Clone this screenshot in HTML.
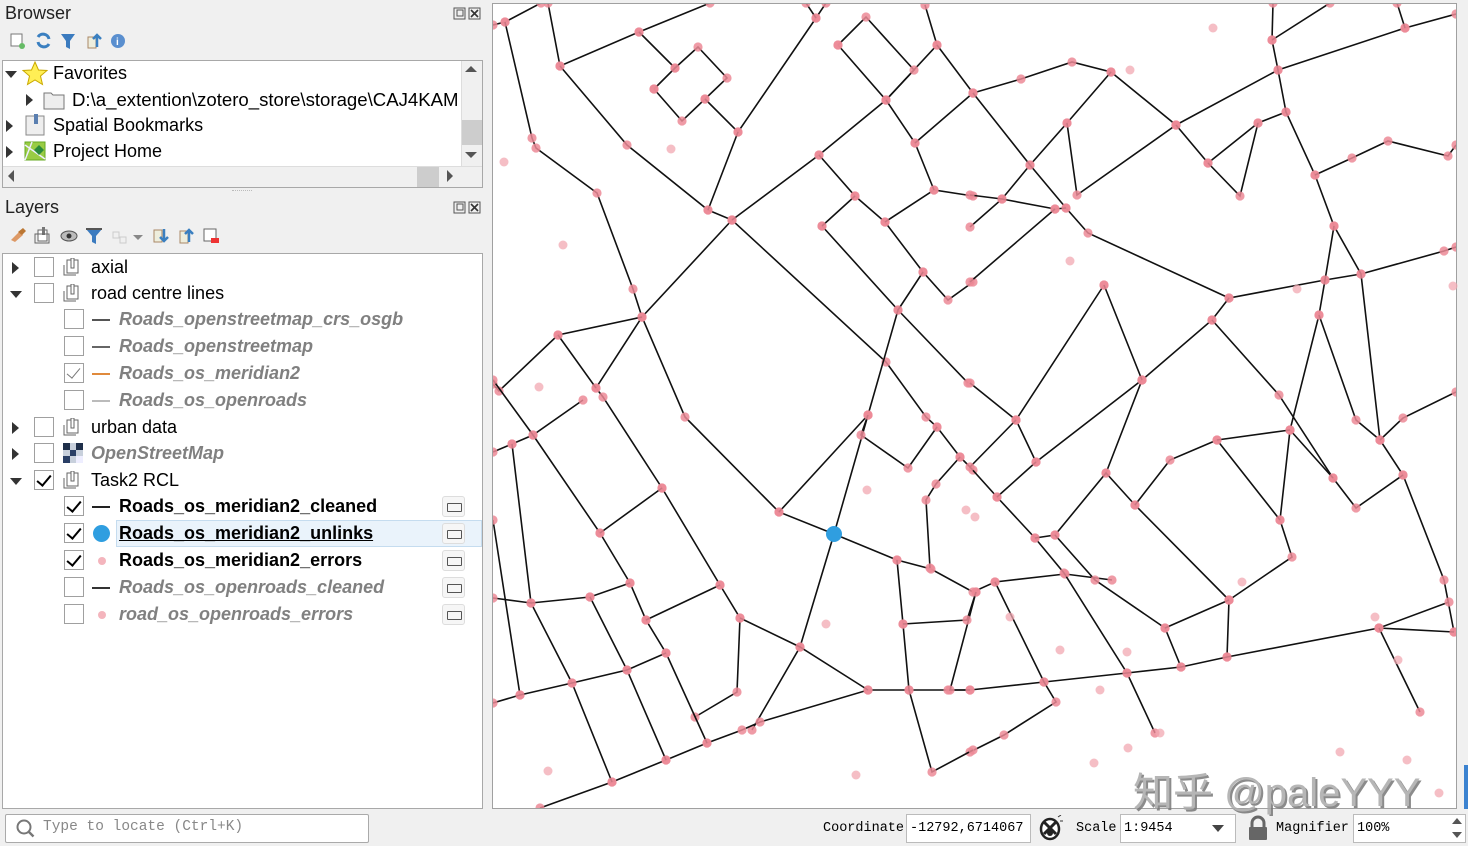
<!DOCTYPE html>
<html><head><meta charset="utf-8">
<style>
*{box-sizing:border-box;margin:0;padding:0}
body{width:1468px;height:846px;background:#f0f0f0;font-family:"Liberation Sans","Noto Sans CJK SC",sans-serif;position:relative;overflow:hidden;color:#000}
.abs{position:absolute}
.title{font-size:18px;color:#222}
.tree{background:#fff;border:1px solid #a8a8a8}
.row{position:absolute;height:27px;font-size:18px;line-height:27px;white-space:nowrap}
.cb{position:absolute;width:20px;height:20px;border:1px solid #a0a0a0;background:#fff;top:3px}
.cb.on::after{content:"";position:absolute;left:5px;top:1px;width:6px;height:12px;border:solid #000;border-width:0 2.5px 2.5px 0;transform:rotate(40deg)}
.cb.g::after{border-color:#777;border-width:0 1.5px 1.5px 0}
.arr{position:absolute;width:0;height:0}
.ar{border-left:7px solid #333;border-top:6px solid transparent;border-bottom:6px solid transparent;top:8px}
.ad{border-top:7px solid #333;border-left:6px solid transparent;border-right:6px solid transparent;top:11px}
.it{font-style:italic;color:#808080;font-weight:bold}
.bd{font-weight:bold}
.grp{position:absolute;width:18px;height:18px;top:4px}
.sym{position:absolute;width:18px;height:2px;top:13px}
.mem{position:absolute;left:442px;width:23px;height:21px;border:1px solid #ddd;border-radius:3px;background:#f6f6f6;top:3px}
.mem::after{content:"";position:absolute;left:4px;top:6px;width:13px;height:7px;border:1.5px solid #555;border-radius:1px}
.mono{font-family:"Liberation Mono","Noto Sans CJK SC",monospace;font-size:13.5px}
</style></head><body>

<div class="abs title" style="left:5px;top:3px">Browser</div>
<svg class="abs" style="left:453px;top:7px" width="30" height="14"><rect x="1" y="1" width="11" height="11" fill="none" stroke="#555"/><rect x="4" y="3" width="6" height="6" fill="none" stroke="#555"/><rect x="16" y="1" width="11" height="11" fill="none" stroke="#555"/><path d="M18 3l7 7M25 3l-7 7" stroke="#333" stroke-width="1.6"/></svg>
<svg class="abs" style="left:8px;top:31px" width="120" height="20">
<rect x="3" y="3" width="11" height="12" fill="#fff" stroke="#777"/><circle cx="14" cy="15" r="3" fill="#6b6"/>
<path d="M30 6a6 6 0 0 1 11 2M41 13a6 6 0 0 1-11-2" stroke="#3a7fc0" stroke-width="3" fill="none"/>
<path d="M53 3h14l-5 7v8l-4-2v-6z" fill="#3b7bbf"/>
<rect x="80" y="6" width="8" height="11" fill="#eed" stroke="#a86"/><path d="M89 16V5M85 8l4-4 4 4" stroke="#3a7fc0" stroke-width="2.5" fill="none"/>
<circle cx="110" cy="10" r="7" fill="#5a8fcf"/><text x="108" y="14" font-size="10" fill="#fff" font-weight="bold">i</text>
</svg>
<div class="abs tree" style="left:2px;top:60px;width:481px;height:128px"></div>
<div class="row" style="left:0;top:60px;width:460px">
 <div class="arr ad" style="left:5px"></div>
 <svg class="abs" style="left:22px;top:1px" width="26" height="25"><path d="M13 1l3.5 8 8.5.5-6.5 5.5 2 8.5-7.5-4.5-7.5 4.5 2-8.5L1 9.5 9.5 9z" fill="#ffef55" stroke="#c9a800" stroke-width="1"/></svg>
 <span class="abs" style="left:53px">Favorites</span></div>
<div class="row" style="left:0;top:86px;width:461px;overflow:hidden;font-size:18.6px">
 <div class="arr ar" style="left:26px"></div>
 <svg class="abs" style="left:43px;top:4px" width="22" height="20"><path d="M1 3h7l2 2h11v14H1z" fill="#eee" stroke="#777"/></svg>
 <span class="abs" style="left:72px">D:\a_extention\zotero_store\storage\CAJ4KAM</span></div>
<div class="row" style="left:0;top:112px">
 <div class="arr ar" style="left:6px"></div>
 <svg class="abs" style="left:24px;top:2px" width="22" height="22"><rect x="2" y="2" width="18" height="19" fill="#eee" stroke="#888"/><rect x="10" y="0" width="4" height="10" fill="#5a7fb0"/></svg>
 <span class="abs" style="left:53px">Spatial Bookmarks</span></div>
<div class="row" style="left:0;top:138px">
 <div class="arr ar" style="left:6px"></div>
 <svg class="abs" style="left:24px;top:3px" width="22" height="20"><rect x="1" y="1" width="20" height="18" fill="#9c4" stroke="#6a2"/><path d="M1 4l20 14M8 1l-7 18" stroke="#eef" stroke-width="1.5"/><path d="M10 9l5-5 5 5-5 5z" fill="#2a8a3a"/></svg>
 <span class="abs" style="left:53px">Project Home</span></div>
<div class="abs" style="left:461px;top:61px;width:21px;height:105px;background:#f0f0f0;border-left:1px solid #ddd"></div>
<div class="abs" style="left:462px;top:120px;width:20px;height:25px;background:#cdcdcd"></div>
<div class="arr" style="left:465px;top:66px;border-bottom:6px solid #555;border-left:6px solid transparent;border-right:6px solid transparent"></div>
<div class="arr" style="left:465px;top:152px;border-top:6px solid #555;border-left:6px solid transparent;border-right:6px solid transparent"></div>
<div class="abs" style="left:3px;top:166px;width:479px;height:21px;background:#f0f0f0;border-top:1px solid #ddd"></div>
<div class="abs" style="left:417px;top:167px;width:22px;height:20px;background:#cdcdcd"></div>
<div class="arr" style="left:8px;top:170px;border-right:6px solid #555;border-top:6px solid transparent;border-bottom:6px solid transparent"></div>
<div class="arr" style="left:447px;top:170px;border-left:6px solid #555;border-top:6px solid transparent;border-bottom:6px solid transparent"></div>

<div class="abs" style="left:232px;top:190px;width:20px;height:2px;border-top:1px dotted #bbb"></div>

<div class="abs title" style="left:5px;top:197px">Layers</div>
<svg class="abs" style="left:453px;top:201px" width="30" height="14"><rect x="1" y="1" width="11" height="11" fill="none" stroke="#555"/><rect x="4" y="3" width="6" height="6" fill="none" stroke="#555"/><rect x="16" y="1" width="11" height="11" fill="none" stroke="#555"/><path d="M18 3l7 7M25 3l-7 7" stroke="#333" stroke-width="1.6"/></svg>
<svg class="abs" style="left:8px;top:226px" width="215" height="20">
<path d="M3 14l8-8 4 3-8 7z" fill="#d96"/><path d="M10 6l5-4 3 3-4 4z" fill="#b73"/>
<rect x="30" y="4" width="9" height="11" fill="#fff" stroke="#666"/><rect x="34" y="1" width="3" height="8" fill="#777"/><rect x="27" y="8" width="14" height="9" fill="none" stroke="#666"/>
<ellipse cx="61" cy="10" rx="8" ry="5" fill="#bbb" stroke="#555"/><circle cx="61" cy="10" r="2.5" fill="#333"/>
<path d="M78 3h16l-6 7v8l-4-2v-6z" fill="#3b7bbf"/><path d="M78 3h16" stroke="#555" stroke-width="2"/>
<rect x="105" y="6" width="6" height="6" fill="none" stroke="#ccc"/><rect x="112" y="11" width="6" height="6" fill="none" stroke="#ccc"/>
<path d="M125 9l5 5 5-5z" fill="#888"/>
<rect x="146" y="4" width="8" height="12" fill="#eed" stroke="#a86"/><path d="M156 3v12M152 11l4 4 4-4" stroke="#3a7fc0" stroke-width="2.5" fill="none"/>
<rect x="172" y="5" width="8" height="12" fill="#eed" stroke="#a86"/><path d="M181 16V5M177 8l4-4 4 4" stroke="#3a7fc0" stroke-width="2.5" fill="none"/>
<rect x="196" y="3" width="12" height="12" fill="#fff" stroke="#666"/><rect x="203" y="12" width="8" height="5" fill="#e33"/>
</svg>
<div class="abs tree" style="left:2px;top:253px;width:481px;height:556px"></div>
<div class="abs" style="left:116px;top:520px;width:366px;height:27px;background:#eaf3fb;border:1px solid #c5dcef"></div>

<div class="row" style="left:0;top:254px">
 <div class="arr ar" style="left:12px"></div><div class="cb" style="left:34px"></div>
 <svg class="grp" style="left:63px" viewBox="0 0 18 18"><rect x="4" y="2" width="11" height="13" fill="#fff" stroke="#666"/><rect x="8" y="0" width="3" height="10" fill="#fff" stroke="#666"/><path d="M1 7v10h12" fill="none" stroke="#666"/></svg>
 <span class="abs" style="left:91px">axial</span></div>
<div class="row" style="left:0;top:280px">
 <div class="arr ad" style="left:10px"></div><div class="cb" style="left:34px"></div>
 <svg class="grp" style="left:63px" viewBox="0 0 18 18"><rect x="4" y="2" width="11" height="13" fill="#fff" stroke="#666"/><rect x="8" y="0" width="3" height="10" fill="#fff" stroke="#666"/><path d="M1 7v10h12" fill="none" stroke="#666"/></svg>
 <span class="abs" style="left:91px">road centre lines</span></div>
<div class="row" style="left:0;top:306px"><div class="cb" style="left:64px"></div><div class="sym" style="left:92px;background:#555"></div><span class="abs it" style="left:119px">Roads_openstreetmap_crs_osgb</span></div>
<div class="row" style="left:0;top:333px"><div class="cb" style="left:64px"></div><div class="sym" style="left:92px;background:#666"></div><span class="abs it" style="left:119px">Roads_openstreetmap</span></div>
<div class="row" style="left:0;top:360px"><div class="cb on g" style="left:64px"></div><div class="sym" style="left:92px;background:#e08a3c"></div><span class="abs it" style="left:119px">Roads_os_meridian2</span></div>
<div class="row" style="left:0;top:387px"><div class="cb" style="left:64px"></div><div class="sym" style="left:92px;background:#bbb"></div><span class="abs it" style="left:119px">Roads_os_openroads</span></div>
<div class="row" style="left:0;top:414px">
 <div class="arr ar" style="left:12px"></div><div class="cb" style="left:34px"></div>
 <svg class="grp" style="left:63px" viewBox="0 0 18 18"><rect x="4" y="2" width="11" height="13" fill="#fff" stroke="#666"/><rect x="8" y="0" width="3" height="10" fill="#fff" stroke="#666"/><path d="M1 7v10h12" fill="none" stroke="#666"/></svg>
 <span class="abs" style="left:91px">urban data</span></div>
<div class="row" style="left:0;top:440px">
 <div class="arr ar" style="left:12px"></div><div class="cb" style="left:34px"></div>
 <svg class="grp" style="left:63px;width:20px;height:20px;top:3px" viewBox="0 0 20 20"><rect width="20" height="20" fill="#c8d0dc"/><rect x="0" y="0" width="7" height="7" fill="#1f2f4a"/><rect x="13" y="0" width="7" height="7" fill="#1f2f4a"/><rect x="7" y="7" width="6" height="6" fill="#2a3f66"/><rect x="0" y="13" width="7" height="7" fill="#2a3f66"/><rect x="13" y="13" width="7" height="7" fill="#eef"/></svg>
 <span class="abs it" style="left:91px">OpenStreetMap</span></div>
<div class="row" style="left:0;top:467px">
 <div class="arr ad" style="left:10px"></div><div class="cb on" style="left:34px"></div>
 <svg class="grp" style="left:63px" viewBox="0 0 18 18"><rect x="4" y="2" width="11" height="13" fill="#fff" stroke="#666"/><rect x="8" y="0" width="3" height="10" fill="#fff" stroke="#666"/><path d="M1 7v10h12" fill="none" stroke="#666"/></svg>
 <span class="abs" style="left:91px">Task2 RCL</span></div>
<div class="row" style="left:0;top:493px;width:480px"><div class="cb on" style="left:64px"></div><div class="sym" style="left:92px;background:#222"></div><span class="abs bd" style="left:119px">Roads_os_meridian2_cleaned</span><div class="mem"></div></div>
<div class="row" style="left:0;top:520px;width:480px"><div class="cb on" style="left:64px"></div><div class="abs" style="left:93px;top:5px;width:17px;height:17px;border-radius:50%;background:#2f9ee0"></div><span class="abs bd" style="left:119px;text-decoration:underline">Roads_os_meridian2_unlinks</span><div class="mem"></div></div>
<div class="row" style="left:0;top:547px;width:480px"><div class="cb on" style="left:64px"></div><div class="abs" style="left:98px;top:10px;width:8px;height:8px;border-radius:50%;background:#f4b5bd"></div><span class="abs bd" style="left:119px">Roads_os_meridian2_errors</span><div class="mem"></div></div>
<div class="row" style="left:0;top:574px;width:480px"><div class="cb" style="left:64px"></div><div class="sym" style="left:92px;background:#333"></div><span class="abs it" style="left:119px">Roads_os_openroads_cleaned</span><div class="mem"></div></div>
<div class="row" style="left:0;top:601px;width:480px"><div class="cb" style="left:64px"></div><div class="abs" style="left:98px;top:10px;width:8px;height:8px;border-radius:50%;background:#f4b5bd"></div><span class="abs it" style="left:119px">road_os_openroads_errors</span><div class="mem"></div></div>

<div class="abs" style="left:492px;top:3px;width:965px;height:806px;background:#fff;border:1px solid #a0a0a0"></div>
<div class="abs" style="left:1464px;top:765px;width:4px;height:44px;background:#3b82d0"></div>
<svg class="abs" style="left:0;top:0" width="1468" height="846">
<defs>
<marker id="d" markerWidth="12" markerHeight="12" refX="6" refY="6" markerUnits="userSpaceOnUse"><circle cx="6" cy="6" r="4.6" fill="#ec8a96" fill-opacity="0.85"/></marker>
<clipPath id="c"><rect x="493" y="4" width="963" height="804"/></clipPath>
</defs>
<g clip-path="url(#c)" fill="none" stroke="#111" stroke-width="1.6" marker-start="url(#d)" marker-mid="url(#d)" marker-end="url(#d)">
<polyline points="493,25 505,22 541,3"/>
<polyline points="505,22 532,138 536,148 597,193 633,289 642,317 685,417 779,512 834,534 897,560 931,569 973,592 995,582 1065,574 1112,580"/>
<polyline points="548,3 560,66 639,32 710,3"/>
<polyline points="560,66 627,145 708,210 732,220 886,362 926,417 937,427 960,457 973,470"/>
<polyline points="639,32 675,68"/>
<polyline points="654,89 675,68 698,47 727,78 705,99 682,121 654,89"/>
<polyline points="705,99 738,132 816,18 826,3"/>
<polyline points="816,18 806,3"/>
<polyline points="738,132 708,210"/>
<polyline points="732,220 642,317 596,388 603,397 662,488 720,585 740,618 737,692 695,717"/>
<polyline points="642,317 558,335 499,391 493,384"/>
<polyline points="558,335 596,388"/>
<polyline points="732,220 819,155 886,100 937,45 925,5"/>
<polyline points="819,155 855,196 885,222 923,272 948,300 973,282"/>
<polyline points="822,226 898,310 968,383"/>
<polyline points="855,196 822,226"/>
<polyline points="885,222 934,190 973,196"/>
<polyline points="923,272 898,310 868,415 834,534 800,647 752,730"/>
<polyline points="868,415 779,512"/>
<polyline points="838,45 866,17 914,70 886,100 838,45"/>
<polyline points="886,100 915,143 934,190"/>
<polyline points="915,143 973,93 937,45"/>
<polyline points="973,93 1021,79 1072,62 1111,72 1176,125 1278,70 1405,28 1456,14"/>
<polyline points="1405,28 1397,3"/>
<polyline points="1111,72 1067,123 1030,165 1002,199 970,227"/>
<polyline points="973,93 1030,165 1066,208 1088,233 1229,298 1325,280 1361,274 1444,251 1456,247"/>
<polyline points="1067,123 1077,195 1176,125"/>
<polyline points="970,195 1002,199 1055,209 1066,208"/>
<polyline points="1055,209 970,282"/>
<polyline points="1176,125 1208,163 1258,123 1286,112"/>
<polyline points="1258,123 1240,196 1208,163"/>
<polyline points="1273,3 1272,40 1278,70 1286,112 1315,175 1334,226 1361,274 1380,440 1403,475 1444,580 1454,632"/>
<polyline points="1272,40 1330,3"/>
<polyline points="1315,175 1352,158 1388,141 1448,156 1456,145"/>
<polyline points="1334,226 1325,280 1319,315 1290,430 1280,520 1292,557 1229,600"/>
<polyline points="1319,315 1356,420 1380,440"/>
<polyline points="1229,298 1212,320 1142,380 1106,473"/>
<polyline points="1212,320 1279,395 1333,478 1356,508 1403,475"/>
<polyline points="1290,430 1333,478"/>
<polyline points="1104,285 1016,420 1036,462 1142,380"/>
<polyline points="1104,285 1142,380"/>
<polyline points="970,383 1016,420"/>
<polyline points="1380,440 1403,418 1456,392"/>
<polyline points="1016,420 970,467 997,497 1035,538 1064,573 1127,673 1155,733"/>
<polyline points="997,497 1036,462"/>
<polyline points="1035,538 1055,535 1106,473 1135,505 1229,600 1227,657"/>
<polyline points="1055,535 1095,580 1165,628 1181,667"/>
<polyline points="1135,505 1170,460 1217,440 1280,520"/>
<polyline points="1217,440 1290,430"/>
<polyline points="1165,628 1229,600"/>
<polyline points="540,808 612,782 666,760 707,743 742,730 760,722 868,690 909,690 948,690 970,690 1044,682 1127,673 1181,667 1227,657 1379,628 1449,602"/>
<polyline points="1379,628 1454,632"/>
<polyline points="1379,628 1420,712"/>
<polyline points="995,582 1044,682 1056,702 1004,735 970,752"/>
<polyline points="976,592 950,690 970,690"/>
<polyline points="493,452 512,444 533,435 583,400"/>
<polyline points="493,380 533,435 600,533 630,583 646,620 666,653 707,743"/>
<polyline points="512,444 531,603 572,683 612,782"/>
<polyline points="493,520 520,695"/>
<polyline points="493,598 531,603 590,597 630,583"/>
<polyline points="590,597 627,670 666,760"/>
<polyline points="493,703 520,695 572,683 627,670 666,653"/>
<polyline points="662,488 600,533"/>
<polyline points="646,620 720,585"/>
<polyline points="740,618 800,647 868,690"/>
<polyline points="868,415 861,435 908,468 937,427"/>
<polyline points="960,457 936,484 926,500 930,568"/>
<polyline points="897,560 903,624 909,690 932,772 973,750"/>
<polyline points="903,624 967,620 976,592"/>
</g>
<g fill="#f2a8b2" fill-opacity="0.75">
<circle cx="504" cy="162" r="4.5"/><circle cx="563" cy="245" r="4.5"/><circle cx="539" cy="387" r="4.5"/><circle cx="671" cy="149" r="4.5"/>
<circle cx="1213" cy="28" r="4.5"/><circle cx="1130" cy="70" r="4.5"/><circle cx="1070" cy="261" r="4.5"/><circle cx="1453" cy="286" r="4.5"/>
<circle cx="867" cy="490" r="4.5"/><circle cx="826" cy="624" r="4.5"/><circle cx="548" cy="771" r="4.5"/><circle cx="856" cy="775" r="4.5"/>
<circle cx="1094" cy="763" r="4.5"/><circle cx="1128" cy="748" r="4.5"/><circle cx="1160" cy="733" r="4.5"/><circle cx="1340" cy="752" r="4.5"/>
<circle cx="1100" cy="690" r="4.5"/><circle cx="1127" cy="652" r="4.5"/><circle cx="966" cy="510" r="4.5"/><circle cx="975" cy="517" r="4.5"/>
<circle cx="1242" cy="582" r="4.5"/><circle cx="1398" cy="660" r="4.5"/><circle cx="1407" cy="760" r="4.5"/><circle cx="1439" cy="793" r="4.5"/>
<circle cx="1010" cy="617" r="4.5"/><circle cx="1375" cy="617" r="4.5"/><circle cx="1060" cy="650" r="4.5"/><circle cx="1297" cy="289" r="4.5"/>
</g>
<circle cx="834" cy="534" r="8" fill="#2f9ee0"/>
</svg>
<div class="abs" style="left:1133px;top:760px;font-size:40px;color:#aaa;text-shadow:2px 2px 0 #777;opacity:.85;font-family:'Liberation Sans','Noto Sans CJK SC',sans-serif">知乎 @paleYYY</div>

<div class="abs" style="left:5px;top:814px;width:364px;height:29px;background:#fff;border:1px solid #aaa;border-radius:2px"></div>
<svg class="abs" style="left:15px;top:818px" width="22" height="22"><circle cx="9" cy="9" r="6.5" stroke="#777" stroke-width="2" fill="none"/><path d="M13.5 13.5l5 5" stroke="#777" stroke-width="2.4"/></svg>
<div class="abs mono" style="left:43px;top:819px;font-size:14.5px;color:#888">Type to locate (Ctrl+K)</div>
<div class="abs mono" style="left:823px;top:821px">Coordinate</div>
<div class="abs" style="left:906px;top:814px;width:125px;height:29px;background:#fff;border:1px solid #bbb"></div>
<div class="abs mono" style="left:910px;top:821px">-12792,6714067</div>
<svg class="abs" style="left:1039px;top:815px" width="24" height="26"><ellipse cx="11" cy="14" rx="9" ry="10" fill="#fff" stroke="#222" stroke-width="2.5"/><path d="M5 7l12 12M17 7L5 19" stroke="#222" stroke-width="3"/><circle cx="11" cy="18" r="3" fill="#222"/><path d="M19 2l3-2M21 6l3 0" stroke="#333"/></svg>
<div class="abs mono" style="left:1076px;top:821px">Scale</div>
<div class="abs" style="left:1120px;top:814px;width:116px;height:29px;background:#fff;border:1px solid #bbb"></div>
<div class="abs mono" style="left:1124px;top:821px">1:9454</div>
<div class="arr" style="left:1212px;top:825px;border-top:7px solid #444;border-left:6px solid transparent;border-right:6px solid transparent"></div>
<svg class="abs" style="left:1247px;top:815px" width="22" height="26"><path d="M5 12V8a6 6 0 0 1 12 0v4" stroke="#666" stroke-width="3" fill="none"/><rect x="2" y="12" width="18" height="13" rx="1" fill="#666"/></svg>
<div class="abs mono" style="left:1276px;top:821px">Magnifier</div>
<div class="abs" style="left:1353px;top:814px;width:113px;height:29px;background:#fff;border:1px solid #bbb"></div>
<div class="abs mono" style="left:1357px;top:821px">100%</div>
<div class="arr" style="left:1452px;top:818px;border-bottom:6px solid #555;border-left:5px solid transparent;border-right:5px solid transparent"></div>
<div class="arr" style="left:1452px;top:832px;border-top:6px solid #555;border-left:5px solid transparent;border-right:5px solid transparent"></div>
</body></html>
